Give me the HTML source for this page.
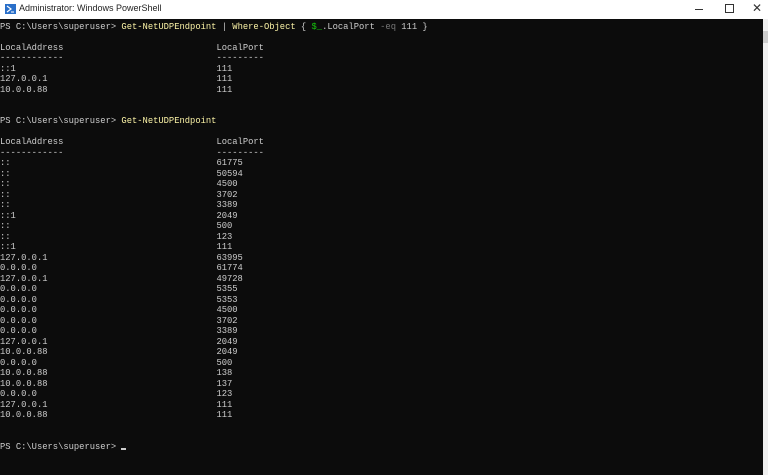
<!DOCTYPE html>
<html><head><style>
body{margin:0;width:768px;height:475px;overflow:hidden;background:#fff;font-family:"Liberation Sans",sans-serif}
#tb{position:absolute;left:0;top:0;width:768px;height:18px;background:#fff;}
#tb .t{position:absolute;left:19px;top:3px;font-size:9px;color:#222}
#con{position:absolute;left:0;top:19px;width:763px;height:456px;background:#0c0c0c;}
#sb{position:absolute;left:763px;top:19px;width:5px;height:456px;background:#f0f0f0}
pre{margin:0;position:absolute;left:0;top:2.5px;font-family:"Liberation Mono",monospace;font-size:8.8px;line-height:10.5px;color:#cccccc}
.y{color:#f9f1a5}.g{color:#767676}.gr{color:#16c60c}
</style></head><body>
<div id="tb">
<svg style="position:absolute;left:5px;top:4px" width="11" height="10"><rect width="11" height="10" fill="#2a6fc9"/><path d="M2 2l4 3-4 3" stroke="#fff" fill="none" stroke-width="1.2"/><path d="M6 8h3" stroke="#fff"/></svg>
<span class="t">Administrator: Windows PowerShell</span>
<div style="position:absolute;left:695px;top:9px;width:8px;height:1px;background:#333"></div>
<div style="position:absolute;left:725px;top:4px;width:7px;height:7px;border:1px solid #333"></div>
<div style="position:absolute;left:752px;top:1px;font-size:12px;color:#333">✕</div>
</div>
<div id="con"><pre>PS C:\Users\superuser> <span class="y">Get-NetUDPEndpoint</span> | <span class="y">Where-Object</span> { <span class="gr">$_</span>.LocalPort <span class="g">-eq</span> 111 }

LocalAddress                             LocalPort
------------                             ---------
::1                                      111
127.0.0.1                                111
10.0.0.88                                111


PS C:\Users\superuser> <span class="y">Get-NetUDPEndpoint</span>

LocalAddress                             LocalPort
------------                             ---------
::                                       61775
::                                       50594
::                                       4500
::                                       3702
::                                       3389
::1                                      2049
::                                       500
::                                       123
::1                                      111
127.0.0.1                                63995
0.0.0.0                                  61774
127.0.0.1                                49728
0.0.0.0                                  5355
0.0.0.0                                  5353
0.0.0.0                                  4500
0.0.0.0                                  3702
0.0.0.0                                  3389
127.0.0.1                                2049
10.0.0.88                                2049
0.0.0.0                                  500
10.0.0.88                                138
10.0.0.88                                137
0.0.0.0                                  123
127.0.0.1                                111
10.0.0.88                                111


PS C:\Users\superuser> <span style="display:inline-block;width:5px;height:2px;background:#ccc;vertical-align:-1px"></span></pre></div>
<div id="sb"><div style="position:absolute;left:0;top:12px;width:5px;height:12px;background:#cdcdcd"></div></div>
</body></html>
